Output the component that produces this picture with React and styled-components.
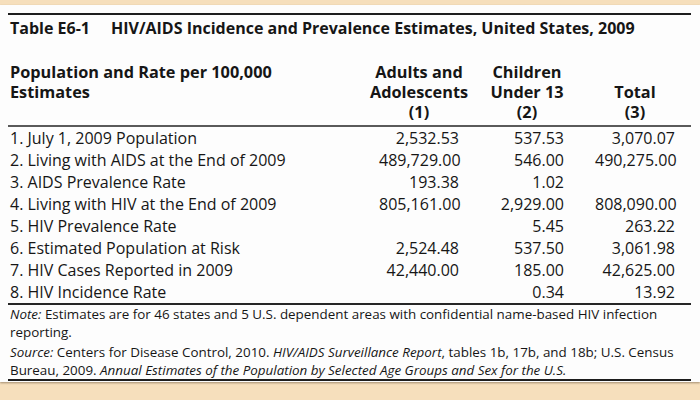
import React from "react";
import styled, { createGlobalStyle } from "styled-components";

const Global = createGlobalStyle`
  html, body { margin: 0; padding: 0; }
  body {
    background: #f6dfbc;
    width: 700px;
    height: 400px;
    overflow: hidden;
    font-family: "Open Sans", "Noto Sans", sans-serif;
    color: #161616;
  }
`;

const Page = styled.div`
  padding-top: 5px;
`;

const Sheet = styled.div`
  background: #fdfdfd;
  height: 377px;
  box-sizing: border-box;
  padding: 8px 9px 0 8px;
  box-shadow: 0 1px 2px rgba(60, 40, 20, 0.45);
`;

const Table = styled.div`
  border-top: 2px solid #1d1d1d;
  border-bottom: 2px solid #1d1d1d;
`;

const Title = styled.div`
  display: flex;
  gap: 21px;
  padding: 3px 0 0 2px;
  height: 20px;
  font-size: 16px;
  line-height: 20px;
  font-weight: 700;
`;

const Grid = styled.div`
  display: grid;
  grid-template-columns: 1fr 80px 74px 80px;
  column-gap: 31px;
  padding: 0 16px 0 2px;
`;

const HeadGrid = styled(Grid)`
  padding-top: 24px;
  padding-bottom: 3px;
  border-bottom: 2px solid #5a5a5a;
  font-size: 16.3px;
  line-height: 20px;
  font-weight: 700;
  white-space: nowrap;
`;

const HeadCell = styled.div`
  display: flex;
  flex-direction: column;
  justify-content: ${(p) => (p.$label ? "flex-start" : "flex-end")};
  align-items: ${(p) => (p.$label ? "flex-start" : "center")};
`;

const Cell = styled.div`
  font-size: 16px;
  line-height: 22px;
  height: 22px;
  white-space: nowrap;
  text-align: ${(p) => (p.$num ? "right" : "left")};
`;

const Notes = styled.div`
  border-top: 2px solid #262626;
  padding: 0 0 0 2px;
  font-size: 13.4px;
  line-height: 18px;
`;

const NoteBlock = styled.p`
  margin: 0 0 ${(p) => (p.$gap ? "2px" : "0")};
`;

const rows = [
  ["1. July 1, 2009 Population", "2,532.53", "537.53", "3,070.07"],
  ["2. Living with AIDS at the End of 2009", "489,729.00", "546.00", "490,275.00"],
  ["3. AIDS Prevalence Rate", "193.38", "1.02", ""],
  ["4. Living with HIV at the End of 2009", "805,161.00", "2,929.00", "808,090.00"],
  ["5. HIV Prevalence Rate", "", "5.45", "263.22"],
  ["6. Estimated Population at Risk", "2,524.48", "537.50", "3,061.98"],
  ["7. HIV Cases Reported in 2009", "42,440.00", "185.00", "42,625.00"],
  ["8. HIV Incidence Rate", "", "0.34", "13.92"],
];

export default function App() {
  return (
    <>
      <Global />
      <Page>
        <Sheet>
          <Table>
            <Title>
              <span>Table E6-1</span>
              <span>HIV/AIDS Incidence and Prevalence Estimates, United States, 2009</span>
            </Title>
            <HeadGrid>
              <HeadCell $label>
                <div>Population and Rate per 100,000</div>
                <div>Estimates</div>
              </HeadCell>
              <HeadCell>
                <div>Adults and</div>
                <div>Adolescents</div>
                <div>(1)</div>
              </HeadCell>
              <HeadCell>
                <div>Children</div>
                <div>Under 13</div>
                <div>(2)</div>
              </HeadCell>
              <HeadCell>
                <div>Total</div>
                <div>(3)</div>
              </HeadCell>
            </HeadGrid>
            <Grid>
              {rows.map((r) => (
                <React.Fragment key={r[0]}>
                  <Cell>{r[0]}</Cell>
                  <Cell $num>{r[1]}</Cell>
                  <Cell $num>{r[2]}</Cell>
                  <Cell $num>{r[3]}</Cell>
                </React.Fragment>
              ))}
            </Grid>
            <Notes>
              <NoteBlock $gap>
                <i>Note:</i> Estimates are for 46 states and 5 U.S. dependent areas with confidential name-based HIV infection reporting.
              </NoteBlock>
              <NoteBlock>
                <i>Source:</i> Centers for Disease Control, 2010. <i>HIV/AIDS Surveillance Report</i>, tables 1b, 17b, and 18b; U.S. Census Bureau, 2009. <i>Annual Estimates of the Population by Selected Age Groups and Sex for the U.S.</i>
              </NoteBlock>
            </Notes>
          </Table>
        </Sheet>
      </Page>
    </>
  );
}
